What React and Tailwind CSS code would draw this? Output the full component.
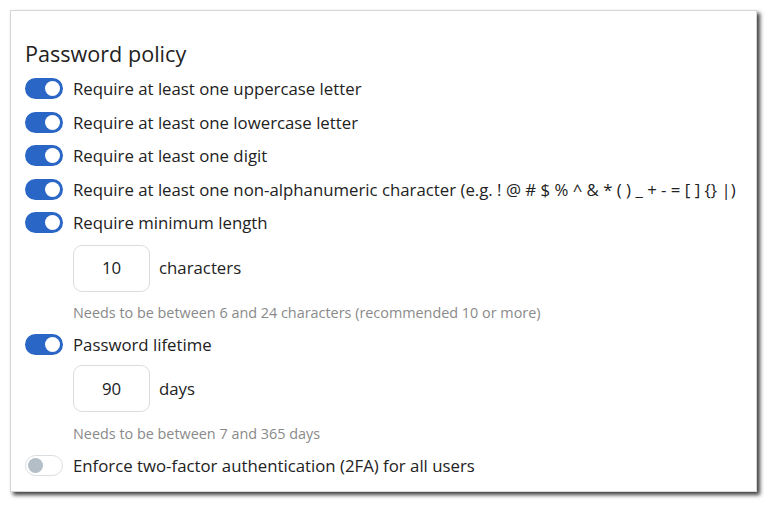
import React from "react";

function Toggle({ on }) {
  if (on) {
    return (
      <span className="flex items-center justify-end w-[38px] h-[21px] rounded-full bg-[#2a66c5] pr-[3px] shrink-0">
        <span className="w-[15px] h-[15px] rounded-full bg-white" />
      </span>
    );
  }
  return (
    <span className="flex items-center justify-start w-[38px] h-[21px] rounded-full bg-white border border-[#d9dee2] pl-[2px] shrink-0">
      <span className="w-[15px] h-[15px] rounded-full bg-[#b3bec6]" />
    </span>
  );
}

function Row({ on, children }) {
  return (
    <div className="flex items-center h-[33.5px] gap-[10px]">
      <Toggle on={on} />
      <span className="text-[16.8px] leading-[23px] text-[#222]">{children}</span>
    </div>
  );
}

function NumberField({ value, unit }) {
  return (
    <div className="flex items-center pl-[48px] gap-[9px]">
      <div className="w-[77px] h-[47px] rounded-[9px] border border-[#dcdcdc] flex items-center justify-center text-[16.8px] text-[#222]">
        {value}
      </div>
      <span className="text-[16.8px] text-[#222]">{unit}</span>
    </div>
  );
}

function Hint({ children }) {
  return (
    <div className="pl-[48px] text-[14.4px] leading-[18px] text-[#8a8a8a]">{children}</div>
  );
}

export default function App() {
  return (
    <div className="w-[774px] h-[510px] bg-white" style={{ fontFamily: '"Open Sans", sans-serif' }}>
      <div className="ml-[10px] mt-[10px] w-[747px] h-[482px] bg-white border border-[#d6d6d6] shadow-[3px_3px_4px_rgba(0,0,0,0.75)] pl-[14px] pt-[29px]">
        <h2 className="text-[21.6px] leading-[28px] text-[#222] mb-[4px]">Password policy</h2>
        <Row on>Require at least one uppercase letter</Row>
        <Row on>Require at least one lowercase letter</Row>
        <Row on>Require at least one digit</Row>
        <Row on>Require at least one non-alphanumeric character (e.g. ! @ # $ % ^ &amp; * ( ) _ + - = [ ] {"{}"} |)</Row>
        <Row on>Require minimum length</Row>
        <div className="mt-[5px]">
          <NumberField value="10" unit="characters" />
        </div>
        <div className="mt-[12px]">
          <Hint>Needs to be between 6 and 24 characters (recommended 10 or more)</Hint>
        </div>
        <div className="mt-[6px]">
          <Row on>Password lifetime</Row>
        </div>
        <div className="mt-[4px]">
          <NumberField value="90" unit="days" />
        </div>
        <div className="mt-[13px]">
          <Hint>Needs to be between 7 and 365 days</Hint>
        </div>
        <div className="mt-[6px]">
          <Row>Enforce two-factor authentication (2FA) for all users</Row>
        </div>
      </div>
    </div>
  );
}
